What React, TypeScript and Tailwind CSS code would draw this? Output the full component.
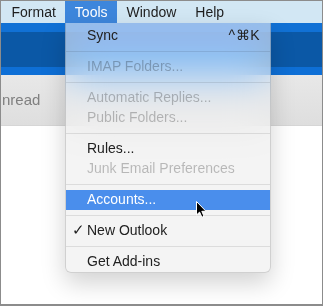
import React from 'react';

type Item =
  | { kind: 'item'; label: string; disabled?: boolean; active?: boolean; checked?: boolean; shortcut?: string }
  | { kind: 'sep' };

const items: Item[] = [
  { kind: 'item', label: 'Sync', shortcut: '^⌘K' },
  { kind: 'sep' },
  { kind: 'item', label: 'IMAP Folders...', disabled: true },
  { kind: 'sep' },
  { kind: 'item', label: 'Automatic Replies...', disabled: true },
  { kind: 'item', label: 'Public Folders...', disabled: true },
  { kind: 'sep' },
  { kind: 'item', label: 'Rules...' },
  { kind: 'item', label: 'Junk Email Preferences', disabled: true },
  { kind: 'sep' },
  { kind: 'item', label: 'Accounts...', active: true },
  { kind: 'sep' },
  { kind: 'item', label: 'New Outlook', checked: true },
  { kind: 'sep' },
  { kind: 'item', label: 'Get Add-ins' },
];

function Cursor() {
  return (
    <svg width="13" height="19" viewBox="0 0 13 19" className="absolute left-[194px] top-[199px]">
      <path d="M1.5 1.5 L1.5 15 L4.6 12.1 L6.9 17.2 L9 16.3 L6.8 11.3 L11 11.3 Z" fill="#000" stroke="#fff" strokeWidth="1" strokeLinejoin="round" />
    </svg>
  );
}

export default function App() {
  const menus = ['Format', 'Tools', 'Window', 'Help'];
  return (
    <div className="relative w-[323px] h-[306px] overflow-hidden border border-b-2 border-[#8c8c8c] bg-white font-['Liberation_Sans',sans-serif]">
      {/* Menu bar */}
      <div className="flex h-[22px] items-stretch bg-[#d2e7f4] pl-px text-[14px] text-[#1e1e1e]">
        {menus.map((m) => (
          <div
            key={m}
            className={
              m === 'Tools'
                ? 'flex items-center px-[9.5px] bg-[#3d86dc] text-white'
                : 'flex items-center px-[9.5px]'
            }
          >
            {m}
          </div>
        ))}
      </div>

      {/* Blue toolbar */}
      <div className="flex flex-col">
        <div className="h-[9px] bg-[#1171d5]" />
        <div className="h-[35px] bg-[#0b58a6]" />
        <div className="h-[8px] bg-[#0e6fd6]" />
      </div>

      {/* Gray filter bar */}
      <div className="flex h-[51px] items-center overflow-hidden border-b border-[#d6d6d6] bg-gradient-to-b from-[#e8e8e8] to-[#dedede]">
        <span className="pl-px text-[15px] text-[#808080]">nread</span>
      </div>

      {/* Tools menu */}
      <div className="absolute left-[64px] top-[22px] w-[206px] h-[250px] rounded-b-[6px] border-x border-b border-black/15 bg-[rgba(238,238,238,0.62)] backdrop-blur-[20px] backdrop-saturate-[1.8] shadow-[0_10px_24px_rgba(0,0,0,0.18)] pt-[2.5px] text-[14px]">
        {items.map((it, i) =>
          it.kind === 'sep' ? (
            <div key={i} className="flex h-[11px] items-center">
              <div className="h-px w-full bg-black/10" />
            </div>
          ) : (
            <div
              key={i}
              className={
                'relative flex h-[20px] items-center pl-[21px] pr-[10px] ' +
                (it.active ? 'bg-[#4a8eec] text-white' : it.disabled ? 'text-black/25' : 'text-[#222]')
              }
            >
              {it.checked && <span className="absolute left-[6px] text-[15px]">✓</span>}
              <span className="flex-1">{it.label}</span>
              {it.shortcut && <span className="tracking-[0.5px]">{it.shortcut}</span>}
            </div>
          )
        )}
      </div>

      <Cursor />
    </div>
  );
}
